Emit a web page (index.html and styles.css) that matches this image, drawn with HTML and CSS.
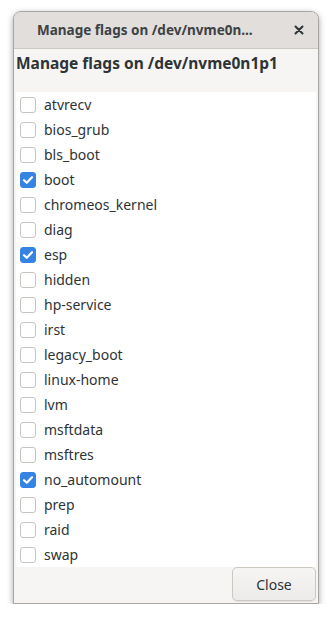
FILE: index.html
```html
<!DOCTYPE html>
<html lang="en">
<head>
  <meta charset="UTF-8">
  <title>Manage flags</title>
  <link rel="stylesheet" href="styles.css">
</head>
<body>
  <div class="window">
    <div class="titlebar">
      <span class="title">Manage flags on /dev/nvme0n...</span>
      <span class="close-x">
        <svg width="10" height="10" viewBox="0 0 10 10"><path d="M1.5 1.5 L8.5 8.5 M8.5 1.5 L1.5 8.5" stroke="#2e3436" stroke-width="2" stroke-linecap="round"/></svg>
      </span>
    </div>
    <div class="content">
      <h2>Manage flags on /dev/nvme0n1p1</h2>
      <ul class="flag-list" id="flags"></ul>
      <div class="actions">
        <button>Close</button>
      </div>
    </div>
  </div>

  <script>
    const flags = ['atvrecv', 'bios_grub', 'bls_boot', 'boot', 'chromeos_kernel', 'diag', 'esp',
      'hidden', 'hp-service', 'irst', 'legacy_boot', 'linux-home', 'lvm', 'msftdata',
      'msftres', 'no_automount', 'prep', 'raid', 'swap'];
    const checked = ['boot', 'esp', 'no_automount'];
    const list = document.getElementById('flags');

    flags.forEach(name => {
      const li = document.createElement('li');
      const box = document.createElement('span');
      box.className = checked.includes(name) ? 'check on' : 'check';
      if (checked.includes(name)) {
        box.innerHTML = '<svg width="16" height="16" viewBox="0 0 16 16"><path d="M4 8.2 L6.8 10.8 L12 5.2" fill="none" stroke="#fff" stroke-width="2.2" stroke-linecap="round" stroke-linejoin="round"/></svg>';
      }
      const label = document.createElement('span');
      label.textContent = name;
      li.appendChild(box);
      li.appendChild(label);
      list.appendChild(li);
    });
  </script>
</body>
</html>
```

FILE: styles.css
```css
body {
  margin: 0;
  background-color: #fff;
  font-family: "Noto Sans", sans-serif;
  color: #2e3436;
}
.window {
  margin: 11px 0 0 13px;
  width: 304px;
  height: 591px;
  border: 1px solid #a8a6a3;
  border-radius: 8px 8px 0 0;
  background-color: #f6f5f4;
  box-shadow: 0 2px 6px rgba(0, 0, 0, 0.35);
  display: flex;
  flex-direction: column;
  overflow: hidden;
}
.titlebar {
  height: 36px;
  flex-shrink: 0;
  background-color: #e1dedb;
  border-bottom: 1px solid #cdc7c2;
  display: flex;
  align-items: center;
  padding: 0 14px 0 23px;
}
.title {
  flex: 1;
  font-size: 13.5px;
  font-weight: 700;
  color: #3d4245;
}
.close-x {
  display: flex;
  align-items: center;
}
.content {
  flex: 1;
  display: flex;
  flex-direction: column;
  padding: 0 2px 2px 2px;
}
.content h2 {
  margin: 0;
  padding: 3px 0 0 0;
  height: 40px;
  font-size: 15.5px;
  font-weight: 700;
  color: #2e3436;
}
.flag-list {
  list-style: none;
  margin: 0;
  padding: 0;
  background-color: #fff;
}
.flag-list li {
  height: 25px;
  display: flex;
  align-items: center;
  font-size: 14px;
}
.check {
  width: 14px;
  height: 14px;
  margin: 0 8px 0 4px;
  border: 1px solid #c8c4c0;
  border-radius: 3px;
  background-color: #fff;
  display: flex;
  align-items: center;
  justify-content: center;
}
.check.on {
  background-color: #3584e4;
  border-color: #3584e4;
}
.check svg {
  flex-shrink: 0;
}
.actions {
  display: flex;
  justify-content: flex-end;
}
.actions button {
  width: 84px;
  height: 34px;
  border: 1px solid #cdc7c2;
  border-radius: 5px;
  background: linear-gradient(#f6f5f4, #edebe9);
  font-family: "Noto Sans", sans-serif;
  font-size: 14px;
  color: #2e3436;
  box-shadow: 0 1px 1px rgba(0, 0, 0, 0.07);
}
```
